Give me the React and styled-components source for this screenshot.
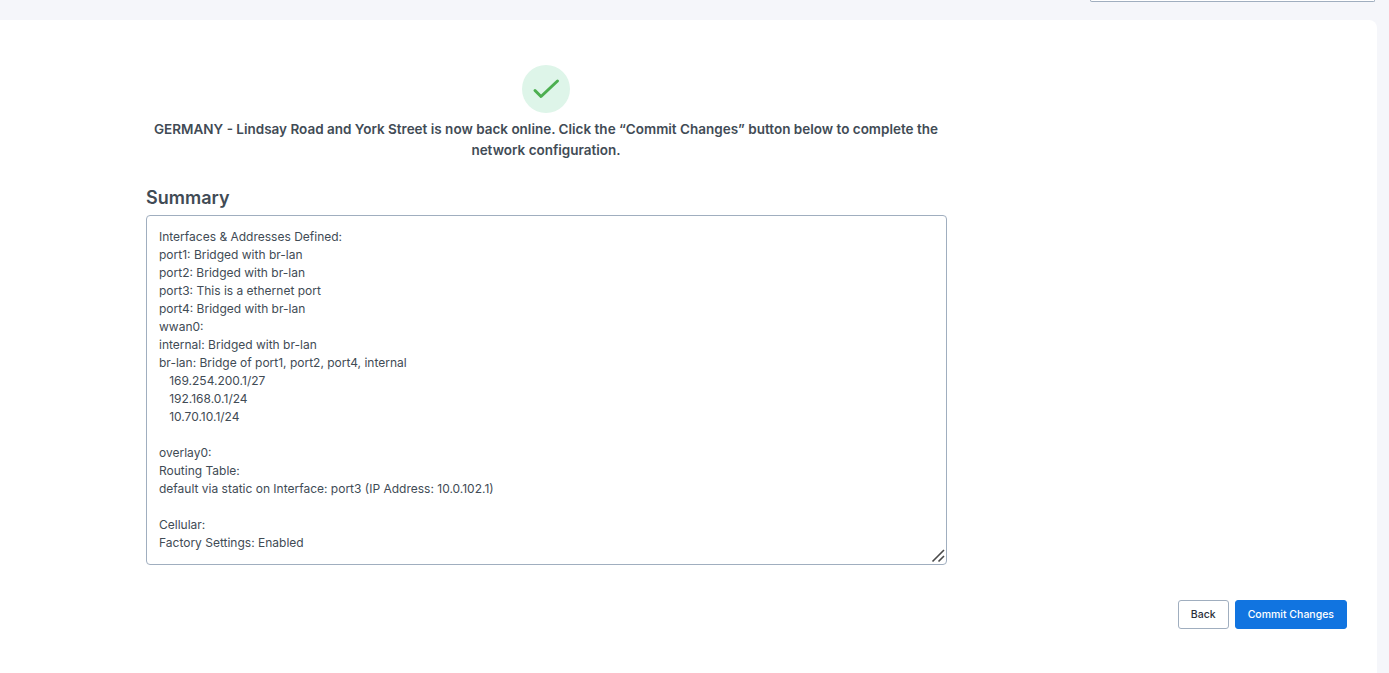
import React from "react";
import styled, { createGlobalStyle } from "styled-components";

const Global = createGlobalStyle`
  html, body { margin: 0; padding: 0; height: 100%; overflow: hidden; background: #f5f6fa; }
  body { font-family: Inter, "Liberation Sans", sans-serif; }
  #root { height: 100%; }
`;

const Page = styled.div`
  width: 1389px;
  height: 673px;
  display: flex;
  flex-direction: column;
  overflow: hidden;
  background: #f5f6fa;
`;

const TopBar = styled.div`
  height: 20px;
  flex: none;
  display: flex;
  justify-content: flex-end;
  align-items: flex-start;
  padding-right: 14px;
`;

const TopField = styled.div`
  width: 285px;
  height: 2px;
  box-sizing: border-box;
  border: 1px solid #a0aebf;
  border-top: none;
  border-radius: 0 0 4px 4px;
  background: #fff;
`;

const Card = styled.main`
  width: 1377px;
  flex: 1;
  box-sizing: border-box;
  background: #fff;
  border-radius: 0 8px 0 0;
  padding: 45px 30px 0 146px;
  display: flex;
  flex-direction: column;
`;

const Column = styled.section`
  width: 801px;
  display: flex;
  flex-direction: column;
`;

const StatusBlock = styled.div`
  width: 800px;
  display: flex;
  flex-direction: column;
  align-items: center;
  gap: 6px;
`;

const IconCircle = styled.div`
  width: 48px;
  height: 48px;
  border-radius: 50%;
  background: #def5e9;
  display: flex;
  align-items: center;
  justify-content: center;
`;

const Message = styled.p`
  margin: 0;
  width: 790px;
  text-align: center;
  font-size: 13.5px;
  line-height: 21px;
  font-weight: 600;
  color: #414b55;
`;

const Heading = styled.h2`
  margin: 23px 0 4px;
  font-size: 18px;
  line-height: 27px;
  font-weight: 600;
  color: #414b55;
`;

const SummaryWrap = styled.div`
  position: relative;
  width: 801px;
  height: 350px;
`;

const SummaryBox = styled.textarea`
  display: block;
  width: 100%;
  height: 100%;
  box-sizing: border-box;
  margin: 0;
  padding: 12px;
  border: 1px solid #a0aebf;
  border-radius: 4px;
  background: #fff;
  color: #414b55;
  font-family: Inter, "Liberation Sans", sans-serif;
  font-size: 12px;
  line-height: 18px;
  outline: none;
  resize: none;
  overflow: hidden;
`;

const Grip = styled.svg`
  position: absolute;
  right: 1px;
  bottom: 1px;
  width: 16px;
  height: 16px;
  pointer-events: none;
`;

const Actions = styled.div`
  margin-top: 35px;
  display: flex;
  justify-content: flex-end;
  gap: 6px;
`;

const Button = styled.button`
  height: 29px;
  box-sizing: border-box;
  padding: 0 12px 1px;
  margin: 0;
  border-radius: 3px;
  font-family: Inter, "Liberation Sans", sans-serif;
  font-size: 10.5px;
  font-weight: 500;
  color: ${(p) => (p.$primary ? "#ffffff" : "#2b2f3a")};
  background: ${(p) => (p.$primary ? "#1174e0" : "#ffffff")};
  border: 1px solid ${(p) => (p.$primary ? "#1174e0" : "#a0aebf")};
  cursor: pointer;
`;

const summary = `Interfaces & Addresses Defined:
port1: Bridged with br-lan
port2: Bridged with br-lan
port3: This is a ethernet port
port4: Bridged with br-lan
wwan0:
internal: Bridged with br-lan
br-lan: Bridge of port1, port2, port4, internal
   169.254.200.1/27
   192.168.0.1/24
   10.70.10.1/24

overlay0:
Routing Table:
default via static on Interface: port3 (IP Address: 10.0.102.1)

Cellular:
Factory Settings: Enabled`;

export default function App() {
  return (
    <Page>
      <Global />
      <TopBar>
        <TopField />
      </TopBar>
      <Card>
        <Column>
          <StatusBlock>
            <IconCircle>
              <svg width="48" height="48" viewBox="0 0 48 48" fill="none">
                <path d="M13 25.5 L19 31.5 L35.5 16" stroke="#4caf50" strokeWidth="3" strokeLinecap="round" strokeLinejoin="round" />
              </svg>
            </IconCircle>
            <Message>
              GERMANY - Lindsay Road and York Street is now back online. Click the “Commit Changes” button below to complete the network configuration.
            </Message>
          </StatusBlock>
          <Heading>Summary</Heading>
          <SummaryWrap>
            <SummaryBox readOnly defaultValue={summary} spellCheck={false} />
            <Grip viewBox="0 0 16 16" fill="none">
              <path d="M2.5 13.5 L14 2 M8.5 13.5 L14 8" stroke="#4a4a4a" strokeWidth="1.6" />
            </Grip>
          </SummaryWrap>
        </Column>
        <Actions>
          <Button>Back</Button>
          <Button $primary>Commit Changes</Button>
        </Actions>
      </Card>
    </Page>
  );
}
